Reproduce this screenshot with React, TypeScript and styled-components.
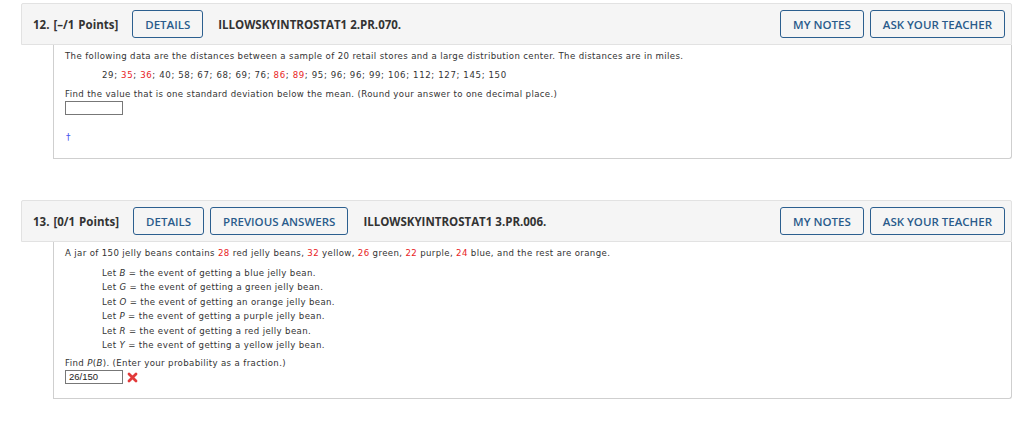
import React from 'react'
import styled, { createGlobalStyle } from 'styled-components'

const GlobalStyle = createGlobalStyle`
  html, body {
    margin: 0;
    padding: 0;
    background: #fff;
  }
  body {
    font-family: "DejaVu Sans", sans-serif;
    color: #333;
  }
`

const Page = styled.div`
  display: flex;
  flex-direction: column;
  gap: 41px;
  padding: 3px 12px 0 21px;
  width: 991px;
`

const Card = styled.section`
  display: flex;
  flex-direction: column;
`

const Header = styled.header`
  display: flex;
  align-items: center;
  height: 40px;
  padding: 0 6px 0 11px;
  background: #f5f5f5;
  border: 1px solid #e2e2e2;
  border-radius: 2px 2px 0 0;
  font-family: "Open Sans", sans-serif;
`

const Label = styled.div`
  font-size: 11.5px;
  font-weight: 700;
  color: #333;
  margin-right: 14px;
  white-space: nowrap;
  word-spacing: 1px;
`

const ButtonGroup = styled.div`
  display: flex;
  gap: 6px;
`

const Button = styled.button`
  height: 28px;
  padding: 0 12px;
  border: 1.5px solid #2c5f8f;
  border-radius: 3px;
  background: transparent;
  color: #2a5b8b;
  font-family: "Open Sans", sans-serif;
  font-size: 11.5px;
  font-weight: 600;
  white-space: nowrap;
`

const Title = styled.div`
  flex: 1;
  margin-left: 15px;
  font-size: 11.5px;
  font-weight: 700;
  color: #333;
  white-space: nowrap;
`

const Body = styled.div<{ $height: number }>`
  margin-left: 32px;
  height: ${({ $height }) => $height}px;
  box-sizing: border-box;
  padding: 5px 0 0 11px;
  border: 1px solid #cfcfcf;
  border-top: none;
  border-radius: 0 0 3px 0;
  font-family: "DejaVu Sans", sans-serif;
  font-size: 8.6px;
  letter-spacing: 0.36px;
  line-height: 12px;
  color: #333;
  white-space: nowrap;
`

const Para = styled.p<{ $mt?: number }>`
  margin: ${({ $mt }) => $mt ?? 0}px 0 0 0;
`

const Indented = styled.div<{ $mt?: number; $lh?: number }>`
  margin: ${({ $mt }) => $mt ?? 0}px 0 0 37px;
  line-height: ${({ $lh }) => $lh ?? 12}px;
`

const DataLine = styled(Indented)`
  letter-spacing: 0.62px;
`

const Red = styled.span`
  color: #e8231e;
`

const Var = styled.i`
  font-style: italic;
`

const AnswerRow = styled.div<{ $mt?: number }>`
  display: flex;
  align-items: center;
  gap: 4px;
  margin-top: ${({ $mt }) => $mt ?? 0}px;
`

const AnswerBox = styled.div`
  width: 58px;
  height: 14px;
  box-sizing: border-box;
  border: 1px solid #777;
  padding: 0 3px;
  font-family: "Liberation Sans", Arial, sans-serif;
  font-size: 9.5px;
  letter-spacing: 0;
  line-height: 12px;
  color: #222;
`

const Dagger = styled.div`
  margin-top: 16px;
  color: #4455ee;
  font-size: 9px;
  padding-left: 1px;
`

const WrongMark = () => (
  <svg width="11" height="11" viewBox="0 0 11 11">
    <path d="M2 2 L9 9 M9 2 L2 9" stroke="#e23a3a" strokeWidth="2.8" strokeLinecap="round" />
  </svg>
)

const data: [string, boolean][] = [
  ['29', false], ['35', true], ['36', true], ['40', false], ['58', false], ['67', false],
  ['68', false], ['69', false], ['76', false], ['86', true], ['89', true], ['95', false],
  ['96', false], ['96', false], ['99', false], ['106', false], ['112', false], ['127', false],
  ['145', false], ['150', false],
]

const events: [string, string][] = [
  ['B', 'a blue'],
  ['G', 'a green'],
  ['O', 'an orange'],
  ['P', 'a purple'],
  ['R', 'a red'],
  ['Y', 'a yellow'],
]

export default function App() {
  return (
    <>
      <GlobalStyle />
      <Page>
        <Card>
          <Header>
            <Label>12. [–/1 Points]</Label>
            <ButtonGroup>
              <Button>DETAILS</Button>
            </ButtonGroup>
            <Title>ILLOWSKYINTROSTAT1 2.PR.070.</Title>
            <ButtonGroup>
              <Button>MY NOTES</Button>
              <Button>ASK YOUR TEACHER</Button>
            </ButtonGroup>
          </Header>
          <Body $height={114}>
            <Para>
              The following data are the distances between a sample of 20 retail stores and a large
              distribution center. The distances are in miles.
            </Para>
            <DataLine $mt={7}>
              {data.map(([v, red], i) => (
                <React.Fragment key={i}>
                  {red ? <Red>{v}</Red> : v}
                  {i < data.length - 1 ? '; ' : ''}
                </React.Fragment>
              ))}
            </DataLine>
            <Para $mt={7}>
              Find the value that is one standard deviation below the mean. (Round your answer to one
              decimal place.)
            </Para>
            <AnswerRow $mt={1}>
              <AnswerBox />
            </AnswerRow>
            <Dagger>†</Dagger>
          </Body>
        </Card>

        <Card>
          <Header>
            <Label>13. [0/1 Points]</Label>
            <ButtonGroup>
              <Button>DETAILS</Button>
              <Button>PREVIOUS ANSWERS</Button>
            </ButtonGroup>
            <Title>ILLOWSKYINTROSTAT1 3.PR.006.</Title>
            <ButtonGroup>
              <Button>MY NOTES</Button>
              <Button>ASK YOUR TEACHER</Button>
            </ButtonGroup>
          </Header>
          <Body $height={157}>
            <Para>
              A jar of 150 jelly beans contains <Red>28</Red> red jelly beans, <Red>32</Red> yellow,{' '}
              <Red>26</Red> green, <Red>22</Red> purple, <Red>24</Red> blue, and the rest are orange.
            </Para>
            <Indented $mt={7} $lh={14.4}>
              {events.map(([v, c]) => (
                <div key={v}>
                  Let <Var>{v}</Var> = the event of getting {c} jelly bean.
                </div>
              ))}
            </Indented>
            <Para $mt={5}>
              Find <Var>P</Var>(<Var>B</Var>). (Enter your probability as a fraction.)
            </Para>
            <AnswerRow $mt={1}>
              <AnswerBox>26/150</AnswerBox>
              <WrongMark />
            </AnswerRow>
          </Body>
        </Card>
      </Page>
    </>
  )
}
